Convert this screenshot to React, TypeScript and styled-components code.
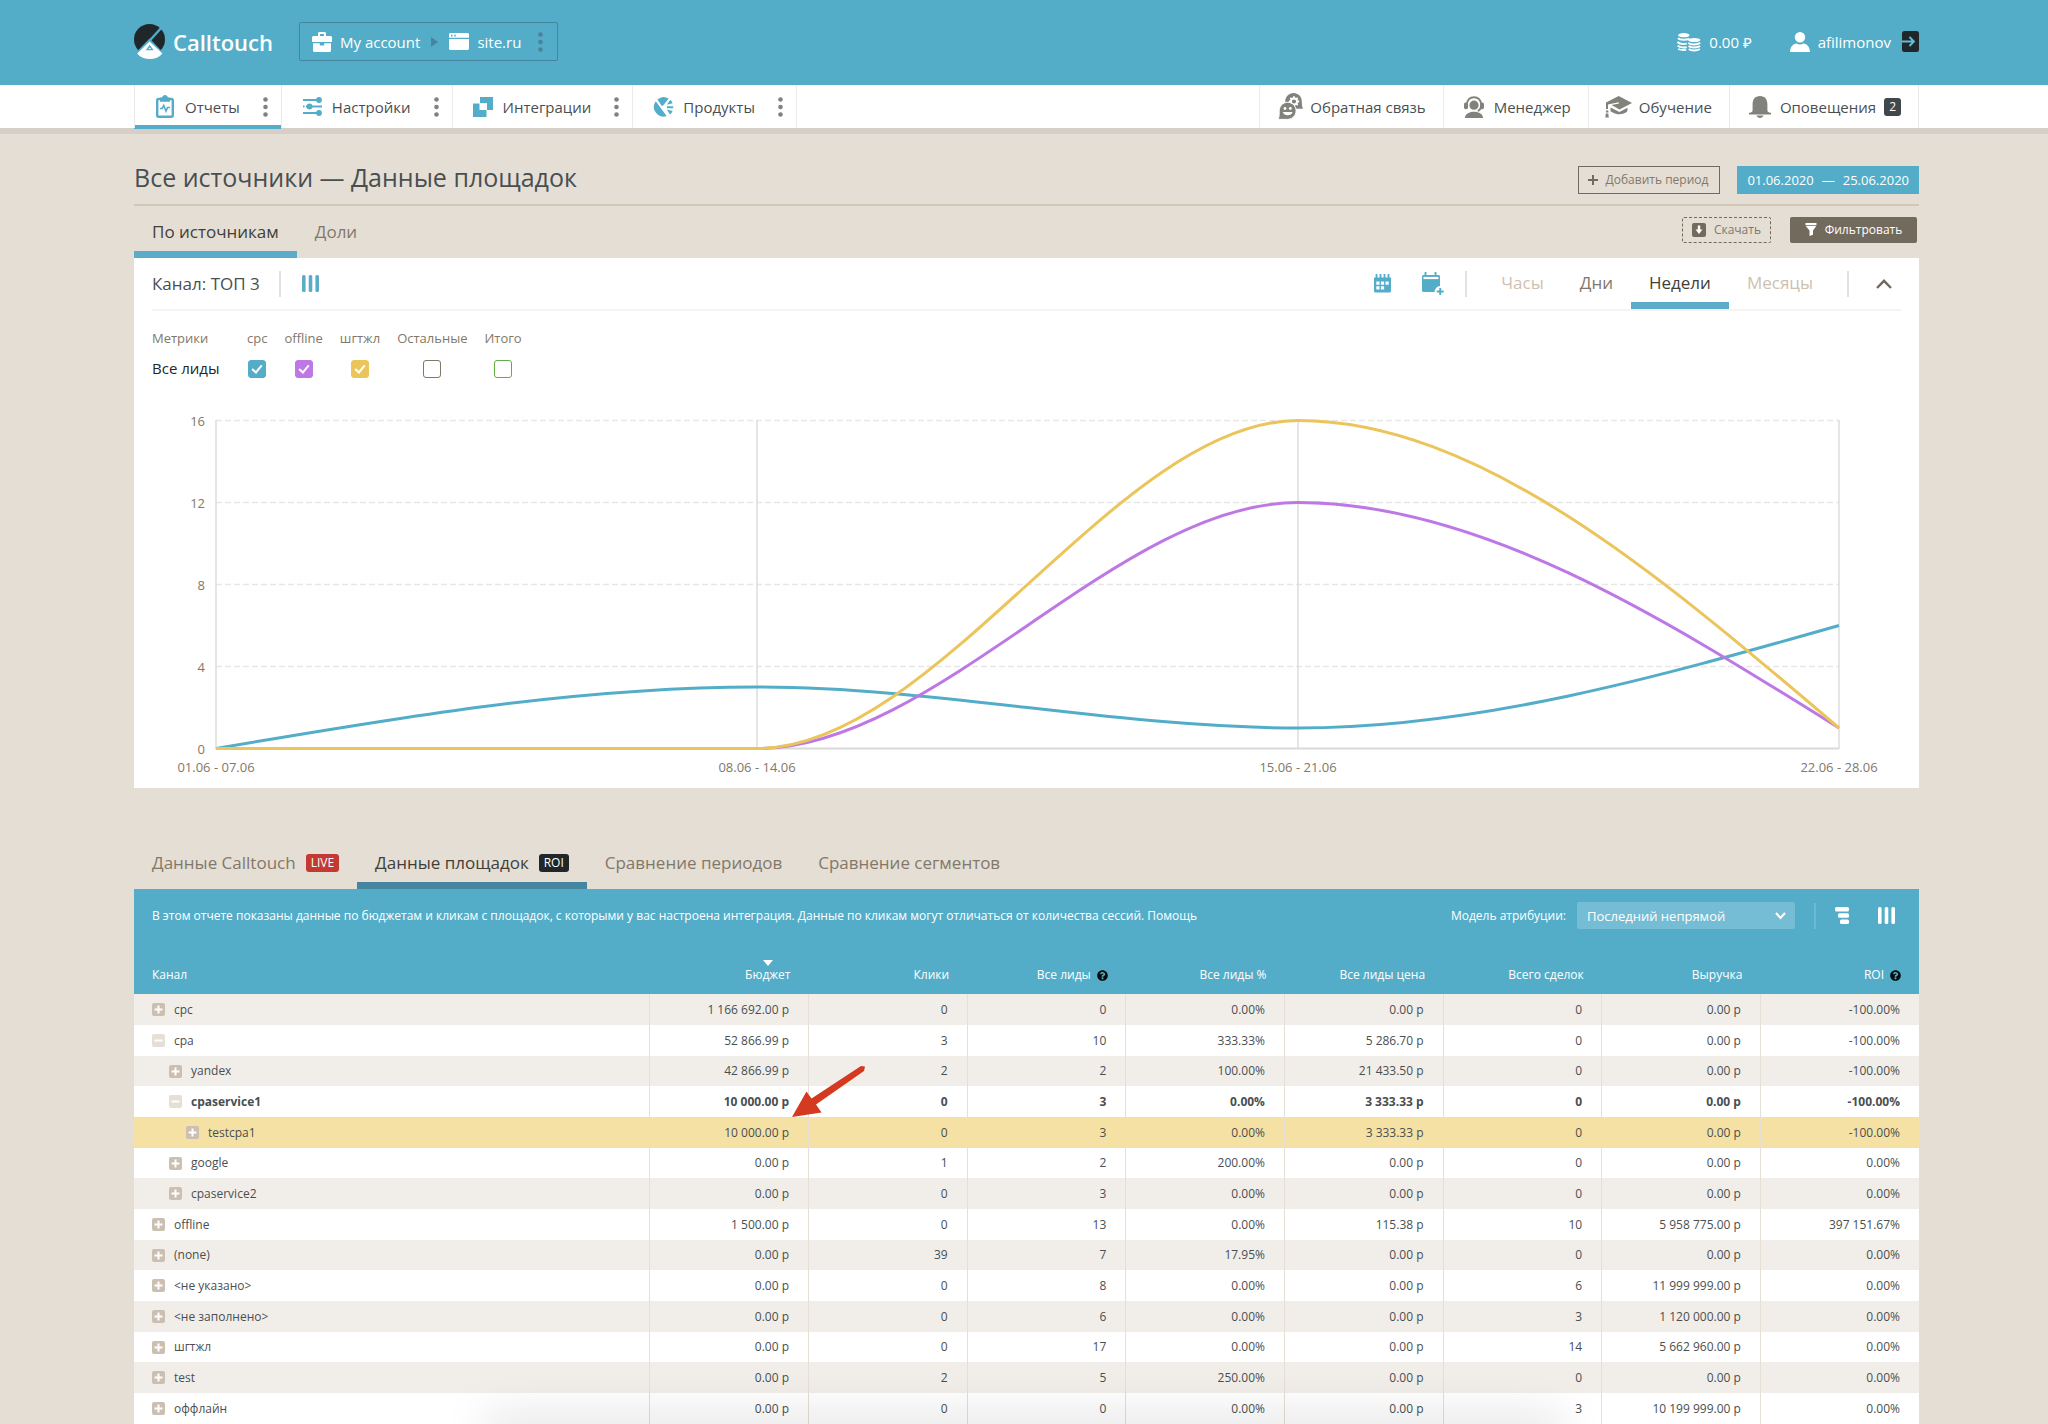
import React from 'react';
import styled, { createGlobalStyle, css } from 'styled-components';
import { FaQuestionCircle } from 'react-icons/fa';

const color = {
  blue: '#53adc8',
  blueDark: '#4585a0',
  sand: '#e5ded5',
  sandLine: '#d3c8b8',
  brown: '#736a5e',
  text: '#494f51',
  muted: '#827869',
  faint: '#cdc1b1',
  dark: '#20272b',
  grey: '#82827c',
};

const GlobalStyle = createGlobalStyle`
  *, *::before, *::after { box-sizing: border-box; }
  body {
    margin: 0;
    background: ${color.sand};
    color: ${color.text};
    font: 12px/18px "Open Sans", "Noto Sans", sans-serif;
  }
  button, select, input { font: inherit; color: inherit; margin: 0; }
  button { background: none; border: 0; padding: 0; cursor: pointer; }
  a { color: inherit; text-decoration: none; }
  svg { display: block; flex: none; overflow: visible; }
`;

/* ---------- shared ---------- */

const gutter = css`
  padding-left: 134px;
  padding-right: 129px;
`;

const Spacer = styled.div`
  flex: 1;
`;

const Divider = styled.span<{ $tone?: string }>`
  width: 2px;
  height: 26px;
  background: ${(p) => p.$tone ?? '#e2e2e1'};
`;

const Badge = styled.span<{ $bg: string }>`
  padding: 0 5px;
  border-radius: 3px;
  background: ${(p) => p.$bg};
  color: #fff;
  font-size: 12px;
  line-height: 18px;
`;

const Dots = ({ fill }: { fill: string }) => (
  <svg width="5" height="20" viewBox="0 0 5 20" fill={fill} aria-hidden>
    <circle cx="2.5" cy="2.5" r="2.3" />
    <circle cx="2.5" cy="10" r="2.3" />
    <circle cx="2.5" cy="17.5" r="2.3" />
  </svg>
);

const BarsIcon = ({ fill }: { fill: string }) => (
  <svg width="17" height="17" viewBox="0 0 17 17" fill={fill} aria-hidden>
    <rect x="0" width="3.6" height="17" rx="1.5" />
    <rect x="6.700" width="3.6" height="17" rx="1.5" />
    <rect x="13.400" width="3.6" height="17" rx="1.5" />
  </svg>
);

/* ---------- header ---------- */

const Header = styled.header`
  ${gutter}
  display: flex;
  align-items: center;
  height: 85px;
  padding-bottom: 2px;
  background: ${color.blue};
  color: #fff;
  font-size: 15px;
`;

const Brand = styled.a`
  display: flex;
  align-items: center;
  gap: 8px;
  margin-right: 26px;
  font-size: 22px;
  font-weight: 600;
`;

const AccountBox = styled.nav`
  display: flex;
  align-items: center;
  gap: 11px;
  height: 39px;
  padding: 0 14px 0 12px;
  border: 1px solid ${color.blueDark};
  border-radius: 2px;
`;

const IconLink = styled.a`
  display: flex;
  align-items: center;
  gap: 8px;
`;

const DotsButton = styled.button`
  display: flex;
  margin-left: 6px;
`;

const UserArea = styled.div`
  display: flex;
  align-items: center;
  gap: 11px;
`;

const Balance = styled(IconLink)`
  margin-right: 27px;
`;

const Logo = () => (
  <svg width="31" height="35" viewBox="0 0 31 35" aria-hidden>
    <circle cx="15.5" cy="15.5" r="15.5" fill={color.dark} />
    <path d="M28.5 2.5 13.5 19" stroke={color.blue} strokeWidth="2.4" />
    <path d="M15.6 14.5 0 30.5V36h31v-5.5Z" fill={color.blue} />
    <path d="M15.6 17.6 3.2 29.4C9 36.8 22.6 36.8 28.4 29.4Z" fill="#fff" />
    <path d="m15.7 20.8-4 5.4h8Z" fill={color.blue} />
    <path d="m15.7 23.4-1.3 1.7h2.6Z" fill="#fff" />
  </svg>
);

const BriefcaseIcon = () => (
  <svg width="20" height="20" viewBox="0 0 20 20" fill="#fff" aria-hidden>
    <path fillRule="evenodd" d="M6 4V1.5C6 .7 6.7 0 7.5 0h5c.8 0 1.5.7 1.5 1.5V4h4.500c.8 0 1.500.7 1.500 1.500V10H0V5.500C0 4.700.7 4 1.500 4Zm2 0h4V2H8Z" />
    <path d="M1 11.300h6.800V13.500h4.400v-2.200H19v7.200c0 .8-.7 1.500-1.500 1.500h-15C1.700 20 1 19.300 1 18.500Z" />
  </svg>
);

const WindowIcon = () => (
  <svg width="20" height="17" viewBox="0 0 20 17" aria-hidden>
    <path fill="#fff" d="M1.500 0h17c.8 0 1.500.7 1.500 1.500V4.800H0V1.500C0 .7.700 0 1.500 0ZM0 6h20v9.500c0 .8-.7 1.500-1.500 1.500h-17C.7 17 0 16.300 0 15.500Z" />
    <path stroke={color.blue} strokeWidth="1.600" d="M2 2.600h1.600M5.200 2.600h1.600" />
  </svg>
);

const CoinsIcon = () => (
  <svg width="24" height="18" viewBox="0 0 24 18" aria-hidden>
    <ellipse cx="6.800" cy="2.200" rx="5.800" ry="2.100" fill="#fff" />
    <path d="M1 5.200c2 1.900 8.400 2 11 .4M.4 9c1.600 1.700 6.200 2.200 9.400 1.600M.6 12.600c1.600 1.600 6 2.100 9.200 1.600M1.200 16c2 1 5 1.200 8 .9" fill="none" stroke="#fff" strokeWidth="1.900" />
    <ellipse cx="17.200" cy="7" rx="6.200" ry="2.100" fill="#fff" />
    <path d="M11.200 9.800c2.200 2.200 9.600 2.200 12 0M11.500 13c2.200 2 9 2 11.600 0M11.800 16c2.200 2 8.400 2 11 0" fill="none" stroke="#fff" strokeWidth="1.900" />
  </svg>
);

const UserIcon = () => (
  <svg width="20" height="20" viewBox="0 0 20 20" fill="#fff" aria-hidden>
    <circle cx="10" cy="5.200" r="5.200" />
    <path d="M0 20c0-5 3-8.200 6.600-8.600 2 1.300 4.800 1.300 6.800 0C17 11.800 20 15 20 20Z" />
  </svg>
);

const ExitIcon = () => (
  <svg width="17" height="21" viewBox="0 0 17 21" aria-hidden>
    <rect width="17" height="21" rx="2.500" fill={color.dark} />
    <path d="M0 10.500h11M7.500 6l4.400 4.500L7.500 15" fill="none" stroke="#5fc0dc" strokeWidth="1.900" />
  </svg>
);

/* ---------- main navigation ---------- */

const NavBar = styled.nav`
  ${gutter}
  display: flex;
  height: 49px;
  padding-bottom: 6px;
  background: linear-gradient(#fff 43px, #d7cfc7 43px);
  font-size: 15px;
`;

const NavItem = styled.div<{ $active?: boolean }>`
  display: flex;
  align-items: center;
  gap: 17px;
  padding: 0 13px 0 19px;
  border-left: 1px solid #ebebea;
  box-shadow: ${(p) => (p.$active ? `inset 0 -3px ${color.blue}, 0 1px ${color.blue}` : 'none')};
`;

const NavEdge = styled.div`
  flex: 1;
  border-left: 1px solid #ebebea;
`;

const NavLink = styled.a`
  display: flex;
  align-items: center;
  gap: 9px;
`;

const NavIcon = styled.span<{ $size: number }>`
  display: flex;
  justify-content: center;
  width: ${(p) => p.$size}px;
`;

const SideItem = styled.a`
  display: flex;
  align-items: center;
  gap: 8px;
  padding: 0 17px 0 18px;
  border-left: 1px solid #ebebea;
  &:last-child {
    border-right: 1px solid #ebebea;
  }
`;

const ReportsIcon = () => (
  <svg width="18" height="23" viewBox="0 0 18 23" aria-hidden>
    <rect x="1.200" y="4" width="15.600" height="17.800" rx="1.500" fill="none" stroke={color.blue} strokeWidth="2.400" />
    <path d="M4 2.500h2C6.500.9 7.600 0 9 0s2.500.9 3 2.500h2v4.200H4Z" fill={color.blue} />
    <path d="M4 13.500h2.200l1.500-3 2.300 5.600 1.600-3.600H14" fill="none" stroke={color.blue} strokeWidth="1.600" />
  </svg>
);

const SettingsIcon = () => (
  <svg width="20" height="19" viewBox="0 0 20 19" aria-hidden>
    <path d="M1 3h12M1 9.500h1.500M4 9.500h16M1 16h12" stroke={color.blue} strokeWidth="2" fill="none" />
    <circle cx="17" cy="3" r="2.900" fill={color.blue} />
    <circle cx="7.500" cy="9.500" r="2.900" fill={color.blue} />
    <circle cx="17" cy="16" r="2.900" fill={color.blue} />
    <path d="M13 3h2M13 16h2" stroke={color.blue} strokeWidth="2" />
  </svg>
);

const IntegrationsIcon = () => (
  <svg width="20" height="20" viewBox="0 0 20 20" aria-hidden>
    <path d="M7 0h13v13h-6V6H7Z" fill={color.blue} />
    <path d="M0 6.500h6.500V13H13.500V20H0Z" fill={color.blue} />
  </svg>
);

const ProductsIcon = () => (
  <svg width="19" height="20" viewBox="0 0 19 20" aria-hidden>
    <path d="M1.800 4.200 12.600 19A9.600 9.600 0 0 1 1.800 4.200Z" fill={color.blue} />
    <path d="M3.400 2.500A9.600 9.600 0 0 1 14.600 1.500L10 7.600 8 9.200Z" fill={color.blue} />
    <path d="M16.400 2.800a9.600 9.600 0 0 1 2.200 3.400l-5.800 1.600ZM13 9.200h6.200v2H13ZM12.800 12.400l5.800 1.600a9.600 9.600 0 0 1-2.600 3.600Z" fill={color.blue} />
  </svg>
);

const FeedbackIcon = () => (
  <svg width="25" height="27" viewBox="0 0 25 27" aria-hidden>
    <path d="M15.500 0c4.600 0 8.300 3.600 8.300 8.200 0 3 .2 5 1.200 7.600h-9c-4.600 0-8.700-3.100-8.700-7.600S10.900 0 15.500 0Z" fill={color.grey} />
    <circle cx="16" cy="8.500" r="3.100" fill="none" stroke="#fff" strokeWidth="2" />
    <path d="M16 3.300v2M16 11.700v2M10.800 8.500h2M19.200 8.500h2M12.300 4.800l1.400 1.400M18.300 10.800l1.400 1.400M19.700 4.800l-1.400 1.400" stroke="#fff" strokeWidth="1.800" />
    <path d="M9.500 9.300c4.900 0 8.600 3.600 8.600 8.400 0 4.900-4 8.700-8.800 8.700H0c1.200-2 1.200-4.600 1.200-8.300 0-5 3.700-8.800 8.300-8.800Z" fill={color.grey} stroke="#fff" strokeWidth="1" />
    <circle cx="7" cy="15.500" r="1.400" fill="#fff" />
    <circle cx="12.300" cy="15.500" r="1.400" fill="#fff" />
    <path d="M4.800 19c1.200 4.400 8.600 4.400 9.800 0Z" fill="#fff" />
  </svg>
);

const ManagerIcon = () => (
  <svg width="20" height="22" viewBox="0 0 20 22" aria-hidden>
    <circle cx="10" cy="9.200" r="4.600" fill={color.grey} />
    <path d="M2.800 9C2.800 4 6 1.200 10 1.200S17.200 4 17.200 9c0 2.800-1.200 5-3.400 6" fill="none" stroke={color.grey} strokeWidth="2" />
    <rect x="0" y="6.600" width="4" height="6.600" rx="1.600" fill={color.grey} />
    <rect x="16" y="6.600" width="4" height="6.600" rx="1.600" fill={color.grey} />
    <path d="M.8 22c.4-4 4-6.300 9.200-6.300s8.800 2.300 9.200 6.300Z" fill={color.grey} />
  </svg>
);

const StudyIcon = () => (
  <svg width="27" height="22" viewBox="0 0 27 22" fill={color.grey} aria-hidden>
    <path d="M13.700 0 27 7 14.500 13.500 6.500 9l7.500-1.500-.4-1.200L3 8.500V13H1V6.600Z" />
    <path d="M5.500 11.500 14.500 16l8-4.300V14l-.5 1.800c-4 3.400-11 3.400-16.500-.6Z" />
    <path d="M1 14.500h2.200l.3 2H.9ZM.8 17.500h2.500l.5 4H.3Z" />
  </svg>
);

const BellIcon = () => (
  <svg width="22" height="22" viewBox="0 0 22 22" fill={color.grey} aria-hidden>
    <path d="M11 0c5 0 7.400 3.600 7.400 8v6.200c0 1.400 1 2.200 3.600 2.800v1.400H0V17c2.600-.6 3.600-1.400 3.600-2.800V8C3.600 3.600 6 0 11 0Z" />
    <path d="M7.500 19.600h7c-.6 1.600-1.800 2.400-3.500 2.400s-2.900-.8-3.500-2.400Z" />
  </svg>
);

/* ---------- page ---------- */

const Page = styled.main`
  ${gutter}
`;

const TitleBar = styled.div`
  display: flex;
  align-items: flex-end;
  gap: 17px;
  padding: 26px 0 10px;
  border-bottom: 2px solid ${color.sandLine};
`;

const Title = styled.h1`
  flex: 1;
  margin: 0;
  font-size: 25px;
  font-weight: 400;
  line-height: 34px;
`;

const AddPeriod = styled.button`
  display: flex;
  align-items: center;
  gap: 8px;
  height: 28px;
  padding: 0 11px 0 9px;
  border: 1px solid ${color.brown};
  color: ${color.muted};
`;

const DateRange = styled.button`
  display: flex;
  align-items: center;
  gap: 8px;
  height: 28px;
  padding: 0 10px;
  background: ${color.blue};
  color: #fff;
  font-size: 13px;
`;

const TabRow = styled.div<{ $gapTop?: boolean }>`
  display: flex;
  align-items: center;
  height: 52px;
  margin-top: ${(p) => (p.$gapTop ? 49 : 0)}px;
`;

const Tab = styled.button<{ $active?: boolean; $line?: string; $off?: boolean }>`
  display: flex;
  align-items: center;
  gap: 10px;
  height: 100%;
  padding: 0 18px 1px;
  font-size: 17px;
  color: ${(p) => (p.$active ? '#423e38' : p.$off ? color.faint : color.muted)};
  box-shadow: ${(p) => (p.$active ? `inset 0 -7px ${p.$line ?? '#5cabc9'}` : 'none')};
`;

const ActionRow = styled.div`
  display: flex;
  gap: 19px;
  margin-right: 2px;
  padding-bottom: 5px;
`;

const DownloadButton = styled.button`
  display: flex;
  align-items: center;
  gap: 8px;
  height: 26px;
  padding: 0 9px;
  border: 1px dashed ${color.brown};
  border-radius: 2px;
  color: ${color.muted};
`;

const FilterButton = styled.button`
  display: flex;
  align-items: center;
  justify-content: center;
  gap: 8px;
  height: 26px;
  width: 127px;
  border-radius: 2px;
  background: ${color.brown};
  color: #fff;
`;

/* ---------- chart panel ---------- */

const Panel = styled.section`
  padding: 0 18px;
  background: #fff;
`;

const PanelHead = styled.div`
  display: flex;
  align-items: center;
  height: 53px;
  border-bottom: 2px solid #f4f4f3;
`;

const PanelTitle = styled.h2`
  margin: 0 19px 0 0;
  font-size: 17px;
  font-weight: 400;
`;

const ToolGroup = styled.div`
  display: flex;
  align-items: center;
  gap: 31px;
  margin: 0 21px;
`;

const ToolButton = styled.button`
  display: flex;
`;

const PeriodTabs = styled.div`
  display: flex;
  align-self: stretch;
  margin: 0 16px;
`;

const CollapseButton = styled.button`
  display: flex;
  margin: 0 9px 0 27px;
`;

const Metrics = styled.fieldset`
  display: flex;
  gap: 17px;
  margin: 0;
  padding: 18px 0 22px;
  border: 0;
  font-size: 13px;
  color: ${color.muted};
`;

const MetricNames = styled.div`
  display: flex;
  flex-direction: column;
  gap: 12px;
  width: 78px;
`;

const MetricTitle = styled.span`
  font-size: 15px;
  color: ${color.dark};
`;

const MetricLabel = styled.label`
  display: flex;
  flex-direction: column;
  align-items: center;
  gap: 13px;
`;

const Check = styled.input<{ $tone: string }>`
  appearance: none;
  display: grid;
  place-items: center;
  width: 18px;
  height: 18px;
  border: 1px solid ${(p) => p.$tone};
  border-radius: 3px;
  background: #fff;
  &:checked {
    background: ${(p) => p.$tone};
  }
  &:checked::after {
    content: '';
    width: 6px;
    height: 10px;
    margin-bottom: 3px;
    border: solid #fff;
    border-width: 0 2px 2px 0;
    transform: rotate(40deg);
  }
`;

const ChartSvg = styled.svg`
  width: 100%;
  height: auto;
  font-size: 13px;
  fill: ${color.muted};
`;

const CalendarIcon = () => (
  <svg width="17" height="19" viewBox="0 0 17 19" aria-hidden>
    <path d="M0 3.500h17V17c0 .8-.7 1.500-1.500 1.500h-14C.7 18.500 0 17.800 0 17Z" fill={color.blue} />
    <path d="M2.500 0v5M6.500 0v5M10.500 0v5M14.500 0v5" stroke={color.blue} strokeWidth="1.800" />
    <path d="M2.300 7.500h3.200v3.200H2.300ZM6.900 7.500h3.200v3.200H6.900ZM11.500 7.500h3.200v3.200h-3.200ZM2.300 12.200h3.200v3.200H2.300ZM6.900 12.200h3.200v3.200H6.900Z" fill="#fff" />
  </svg>
);

const CalendarAddIcon = () => (
  <svg width="22" height="23" viewBox="0 0 22 23" aria-hidden>
    <path d="M0 4.500C0 3.700.7 3 1.500 3h15c.8 0 1.500.7 1.500 1.500V14a6 6 0 0 0-5.500 6H1.500C.7 20 0 19.300 0 18.500Z" fill={color.blue} />
    <path d="M3.500 0v4M13.500 0v4M18.200 16v7M14.700 19.500h7" stroke={color.blue} strokeWidth="1.900" />
    <path d="M1.500 6h15" stroke="#fff" strokeWidth="2.200" />
  </svg>
);

const series = [
  { name: 'cpc', stroke: '#53adc8', values: [0, 3, 1, 6] },
  { name: 'offline', stroke: '#bd78e6', values: [0, 0, 12, 1] },
  { name: 'шгтжл', stroke: '#ebc55b', values: [0, 0, 16, 1] },
];
const weeks = ['01.06 - 07.06', '08.06 - 14.06', '15.06 - 21.06', '22.06 - 28.06'];
const levels = [16, 12, 8, 4, 0];
const px = (i: number) => 64 + i * 541;
const py = (v: number) => 348.5 - v * 20.5;

/* Monotone cubic curve: flat at the inner points, natural at both ends. */
const curve = (v: number[]) => {
  const third = 541 / 3;
  let d = `M${px(0)} ${py(v[0])}`;
  for (let i = 1; i < v.length; i += 1) {
    const from = i === 1 ? (v[0] + v[1]) / 2 : v[i - 1];
    const to = i === v.length - 1 ? (v[i] + v[i - 1]) / 2 : v[i];
    d += `C${px(i - 1) + third} ${py(from)} ${px(i) - third} ${py(to)} ${px(i)} ${py(v[i])}`;
  }
  return d;
};

const Chart = () => (
  <ChartSvg viewBox="0 0 1749 388" role="img" aria-label="Все лиды">
    {levels.map((v) => (
      <g key={v}>
        <path
          d={`M64 ${py(v)}H1687`}
          stroke={v ? '#e7e7e6' : '#d9d9d8'}
          strokeWidth={v ? 1.4 : 2}
          strokeDasharray={v ? '6 3' : undefined}
        />
        <text x="53" y={py(v) + 5} textAnchor="end">{v}</text>
      </g>
    ))}
    {weeks.map((w, i) => (
      <g key={w}>
        <path d={`M${px(i)} 20V349`} stroke="#dcdcdb" strokeWidth="1.500" />
        <text x={px(i)} y="372" textAnchor="middle">{w}</text>
      </g>
    ))}
    {series.map((s) => (
      <path key={s.name} d={curve(s.values)} fill="none" stroke={s.stroke} strokeWidth="3" />
    ))}
  </ChartSvg>
);

/* ---------- report table ---------- */

const Toolbar = styled.div`
  display: flex;
  align-items: center;
  padding: 13px 24px 0 18px;
  background: ${color.blue};
  color: #fff;
`;

const Hint = styled.p`
  flex: 1;
  margin: 0;
`;

const SelectBox = styled.span`
  position: relative;
  margin: 0 19px 0 11px;
  color: #fff;
  svg {
    position: absolute;
    right: 9px;
    top: 10px;
    pointer-events: none;
  }
`;

const Select = styled.select`
  appearance: none;
  display: block;
  width: 218px;
  height: 27px;
  padding: 0 10px;
  border: 0;
  border-radius: 2px;
  background: #75bdd4;
  font-size: 13px;
`;

const TableTools = styled.div`
  display: flex;
  align-items: center;
  gap: 29px;
  margin-left: 19px;
`;

const Table = styled.table`
  width: 100%;
  table-layout: fixed;
  border-collapse: collapse;
`;

const NameCol = styled.col`
  width: 28.9%;
`;

const HeadCell = styled.th<{ $left?: boolean }>`
  height: 65px;
  padding: 0 18px 10px;
  background: ${color.blue};
  color: #fff;
  font-weight: 400;
  text-align: ${(p) => (p.$left ? 'left' : 'right')};
  vertical-align: bottom;
`;

const HeadButton = styled.button<{ $sorted?: boolean }>`
  display: inline-flex;
  flex-direction: column;
  align-items: center;
  vertical-align: bottom;
  ${(p) =>
    p.$sorted &&
    css`
      &::before {
        content: '';
        border: 5px solid transparent;
        border-top: 6px solid #fff;
        border-bottom: 0;
      }
    `}
`;

const HeadLabel = styled.span`
  display: flex;
  align-items: center;
  gap: 6px;
  svg {
    color: #0a0d0e;
  }
`;

const Row = styled.tr<{ $marked?: boolean; $strong?: boolean }>`
  height: 31px;
  background: #fff;
  font-weight: ${(p) => (p.$strong ? 700 : 400)};
  &:nth-child(3n) {
    height: 30px;
  }
  &:nth-child(odd) {
    background: #f1eee9;
  }
  ${(p) =>
    p.$marked &&
    css`
      &&:nth-child(n) {
        background: #f5e1a4;
      }
    `}
`;

const Cell = styled.td`
  position: relative;
  padding: 0 19px 0 18px;
  border-left: 1px solid #e5dfd6;
  text-align: right;
  white-space: nowrap;
`;

const NameCell = styled.th<{ $level: number }>`
  padding: 0 18px 0 ${(p) => 18 + p.$level * 17}px;
  font-weight: inherit;
  text-align: left;
`;

const NameLine = styled.div`
  display: flex;
  align-items: center;
  gap: 9px;
`;

const Toggle = styled.button<{ $open?: boolean }>`
  display: flex;
  border-radius: 2px;
  background: ${(p) => (p.$open ? '#e5dfd6' : '#cabfb0')};
`;

const ArrowMark = styled.svg`
  position: absolute;
  right: -57px;
  bottom: 100%;
  z-index: 1;
`;

const BottomShade = styled.div`
  position: fixed;
  left: 24%;
  right: 24%;
  bottom: -8px;
  height: 8px;
  box-shadow: 0 0 44px 6px rgba(0, 0, 0, 0.17);
  pointer-events: none;
`;

const columns = [
  { label: 'Бюджет', sorted: true },
  { label: 'Клики' },
  { label: 'Все лиды', help: true },
  { label: 'Все лиды %' },
  { label: 'Все лиды цена' },
  { label: 'Всего сделок' },
  { label: 'Выручка' },
  { label: 'ROI', help: true },
];

type RowData = {
  name: string;
  level?: number;
  open?: boolean;
  strong?: boolean;
  marked?: boolean;
  cells: string[];
};

const rows: RowData[] = [
  { name: 'cpc', cells: ['1 166 692.00 р', '0', '0', '0.00%', '0.00 р', '0', '0.00 р', '-100.00%'] },
  { name: 'cpa', open: true, cells: ['52 866.99 р', '3', '10', '333.33%', '5 286.70 р', '0', '0.00 р', '-100.00%'] },
  { name: 'yandex', level: 1, cells: ['42 866.99 р', '2', '2', '100.00%', '21 433.50 р', '0', '0.00 р', '-100.00%'] },
  { name: 'cpaservice1', level: 1, open: true, strong: true, cells: ['10 000.00 р', '0', '3', '0.00%', '3 333.33 р', '0', '0.00 р', '-100.00%'] },
  { name: 'testcpa1', level: 2, marked: true, cells: ['10 000.00 р', '0', '3', '0.00%', '3 333.33 р', '0', '0.00 р', '-100.00%'] },
  { name: 'google', level: 1, cells: ['0.00 р', '1', '2', '200.00%', '0.00 р', '0', '0.00 р', '0.00%'] },
  { name: 'cpaservice2', level: 1, cells: ['0.00 р', '0', '3', '0.00%', '0.00 р', '0', '0.00 р', '0.00%'] },
  { name: 'offline', cells: ['1 500.00 р', '0', '13', '0.00%', '115.38 р', '10', '5 958 775.00 р', '397 151.67%'] },
  { name: '(none)', cells: ['0.00 р', '39', '7', '17.95%', '0.00 р', '0', '0.00 р', '0.00%'] },
  { name: '<не указано>', cells: ['0.00 р', '0', '8', '0.00%', '0.00 р', '6', '11 999 999.00 р', '0.00%'] },
  { name: '<не заполнено>', cells: ['0.00 р', '0', '6', '0.00%', '0.00 р', '3', '1 120 000.00 р', '0.00%'] },
  { name: 'шгтжл', cells: ['0.00 р', '0', '17', '0.00%', '0.00 р', '14', '5 662 960.00 р', '0.00%'] },
  { name: 'test', cells: ['0.00 р', '2', '5', '250.00%', '0.00 р', '0', '0.00 р', '0.00%'] },
  { name: 'оффлайн', cells: ['0.00 р', '0', '0', '0.00%', '0.00 р', '3', '10 199 999.00 р', '0.00%'] },
];

const navItems = [
  { label: 'Отчеты', icon: <ReportsIcon />, active: true },
  { label: 'Настройки', icon: <SettingsIcon /> },
  { label: 'Интеграции', icon: <IntegrationsIcon /> },
  { label: 'Продукты', icon: <ProductsIcon /> },
];

const sideItems = [
  { label: 'Обратная связь', icon: <FeedbackIcon /> },
  { label: 'Менеджер', icon: <ManagerIcon /> },
  { label: 'Обучение', icon: <StudyIcon /> },
  { label: 'Оповещения', icon: <BellIcon />, count: 2 },
];

const metrics = [
  { label: 'cpc', tone: '#53adc8', on: true },
  { label: 'offline', tone: '#bd78e6', on: true },
  { label: 'шгтжл', tone: '#ebc55b', on: true },
  { label: 'Остальные', tone: '#827869', on: false },
  { label: 'Итого', tone: '#62ae42', on: false },
];

const ReportTable = () => (
  <Table>
    <colgroup>
      <NameCol />
      {columns.map((c) => <col key={c.label} />)}
    </colgroup>
    <thead>
      <tr>
        <HeadCell $left scope="col">Канал</HeadCell>
        {columns.map((c) => (
          <HeadCell key={c.label} scope="col">
            <HeadButton $sorted={c.sorted}>
              <HeadLabel>
                {c.label}
                {c.help && <FaQuestionCircle size={11} aria-hidden />}
              </HeadLabel>
            </HeadButton>
          </HeadCell>
        ))}
      </tr>
    </thead>
    <tbody>
      {rows.map((r) => (
        <Row key={r.name} $marked={r.marked} $strong={r.strong}>
          <NameCell scope="row" $level={r.level ?? 0}>
            <NameLine>
              <Toggle $open={r.open} aria-label={r.open ? 'Свернуть' : 'Развернуть'}>
                <svg width="13" height="13" viewBox="0 0 13 13" aria-hidden>
                  <path d={r.open ? 'M2.500 6.500h8' : 'M2.500 6.500h8M6.500 2.500v8'} stroke="#fff" strokeWidth="2" />
                </svg>
              </Toggle>
              {r.name}
            </NameLine>
          </NameCell>
          {r.cells.map((value, i) => (
            <Cell key={columns[i].label}>
              {value}
              {r.marked && i === 0 && (
                <ArrowMark width="73" height="51" viewBox="0 0 73 51" aria-hidden>
                  <path d="M0 51 14.500 25.500 19.500 32.500 69 0 73 0.500 72 5 24 38.500 29.500 46.500Z" fill="#d43a20" />
                </ArrowMark>
              )}
            </Cell>
          ))}
        </Row>
      ))}
    </tbody>
  </Table>
);

export default function App() {
  return (
    <>
      <GlobalStyle />
      <Header>
        <Brand href="#">
          <Logo />
          Calltouch
        </Brand>
        <AccountBox>
          <IconLink href="#">
            <BriefcaseIcon />
            My account
          </IconLink>
          <svg width="7" height="10" viewBox="0 0 7 10" aria-hidden>
            <path d="M0 0 7 5 0 10Z" fill={color.blueDark} />
          </svg>
          <IconLink href="#">
            <WindowIcon />
            site.ru
          </IconLink>
          <DotsButton aria-label="Выбрать сайт">
            <Dots fill="#4b8296" />
          </DotsButton>
        </AccountBox>
        <Spacer />
        <UserArea>
          <Balance href="#">
            <CoinsIcon />
            0.00 ₽
          </Balance>
          <IconLink href="#">
            <UserIcon />
            afilimonov
          </IconLink>
          <ToolButton aria-label="Выйти">
            <ExitIcon />
          </ToolButton>
        </UserArea>
      </Header>

      <NavBar>
        {navItems.map((n) => (
          <NavItem key={n.label} $active={n.active}>
            <NavLink href="#">
              <NavIcon $size={22}>{n.icon}</NavIcon>
              {n.label}
            </NavLink>
            <DotsButton aria-label={n.label}>
              <Dots fill={color.grey} />
            </DotsButton>
          </NavItem>
        ))}
        <NavEdge />
        {sideItems.map((s) => (
          <SideItem key={s.label} href="#">
            <NavIcon $size={24}>{s.icon}</NavIcon>
            {s.label}
            {s.count && <Badge $bg="#3f484b">{s.count}</Badge>}
          </SideItem>
        ))}
      </NavBar>

      <Page>
        <TitleBar>
          <Title>Все источники — Данные площадок</Title>
          <AddPeriod>
            <svg width="10" height="10" viewBox="0 0 10 10" aria-hidden>
              <path d="M0 5h10M5 0v10" stroke={color.brown} strokeWidth="2" />
            </svg>
            Добавить период
          </AddPeriod>
          <DateRange>
            <span>01.06.2020</span>
            <span>—</span>
            <span>25.06.2020</span>
          </DateRange>
        </TitleBar>

        <TabRow>
          <Tab $active>По источникам</Tab>
          <Tab>Доли</Tab>
          <Spacer />
          <ActionRow>
            <DownloadButton>
              <svg width="14" height="14" viewBox="0 0 14 14" aria-hidden>
                <rect width="14" height="14" rx="2" fill={color.brown} />
                <path d="M5.800 2.500h2.400v4h2.300L7 11 3.500 6.500h2.300Z" fill="#fff" />
              </svg>
              Скачать
            </DownloadButton>
            <FilterButton>
              <svg width="12" height="13" viewBox="0 0 12 13" fill="#fff" aria-hidden>
                <path d="M.5 0h11v2H.5ZM.5 2.800h11L8 7.500v4.300L4.500 13V7.500Z" />
              </svg>
              Фильтровать
            </FilterButton>
          </ActionRow>
        </TabRow>

        <Panel>
          <PanelHead>
            <PanelTitle>Канал: ТОП 3</PanelTitle>
            <Divider />
            <ToolGroup>
              <ToolButton aria-label="Колонки">
                <BarsIcon fill="#5cabc9" />
              </ToolButton>
            </ToolGroup>
            <Spacer />
            <ToolGroup>
              <ToolButton aria-label="Календарь">
                <CalendarIcon />
              </ToolButton>
              <ToolButton aria-label="Добавить событие">
                <CalendarAddIcon />
              </ToolButton>
            </ToolGroup>
            <Divider />
            <PeriodTabs>
              <Tab $off>Часы</Tab>
              <Tab>Дни</Tab>
              <Tab $active>Недели</Tab>
              <Tab $off>Месяцы</Tab>
            </PeriodTabs>
            <Divider />
            <CollapseButton aria-label="Свернуть график">
              <svg width="16" height="10" viewBox="0 0 16 10" aria-hidden>
                <path d="M1 9 8 1.800 15 9" fill="none" stroke={color.brown} strokeWidth="2.400" />
              </svg>
            </CollapseButton>
          </PanelHead>
          <Metrics>
            <MetricNames>
              <span>Метрики</span>
              <MetricTitle>Все лиды</MetricTitle>
            </MetricNames>
            {metrics.map((m) => (
              <MetricLabel key={m.label}>
                {m.label}
                <Check type="checkbox" defaultChecked={m.on} $tone={m.tone} />
              </MetricLabel>
            ))}
          </Metrics>
          <Chart />
        </Panel>

        <TabRow $gapTop>
          <Tab>
            Данные Calltouch <Badge $bg="#c23a31">LIVE</Badge>
          </Tab>
          <Tab $active $line={color.blueDark}>
            Данные площадок <Badge $bg={color.dark}>ROI</Badge>
          </Tab>
          <Tab>Сравнение периодов</Tab>
          <Tab>Сравнение сегментов</Tab>
        </TabRow>

        <Toolbar>
          <Hint>
            В этом отчете показаны данные по бюджетам и кликам с площадок, с которыми у вас настроена интеграция.
            Данные по кликам могут отличаться от количества сессий. <a href="#">Помощь</a>
          </Hint>
          <label htmlFor="model">Модель атрибуции:</label>
          <SelectBox>
            <Select id="model" defaultValue="last">
              <option value="last">Последний непрямой</option>
            </Select>
            <svg width="11" height="8" viewBox="0 0 11 8" aria-hidden>
              <path d="m1 1 4.500 5L10 1" fill="none" stroke="#fff" strokeWidth="2" />
            </svg>
          </SelectBox>
          <Divider $tone="#6bbad2" />
          <TableTools>
            <ToolButton aria-label="Группировка">
              <svg width="14" height="17" viewBox="0 0 14 17" fill="#fff" aria-hidden>
                <rect width="14" height="4.500" rx="1.500" />
                <rect x="3" y="6.300" width="11" height="4.500" rx="1.500" />
                <rect x="5" y="12.500" width="9" height="4.500" rx="1.500" />
              </svg>
            </ToolButton>
            <ToolButton aria-label="Колонки таблицы">
              <BarsIcon fill="#fff" />
            </ToolButton>
          </TableTools>
        </Toolbar>
        <ReportTable />
      </Page>
      <BottomShade />
    </>
  );
}
